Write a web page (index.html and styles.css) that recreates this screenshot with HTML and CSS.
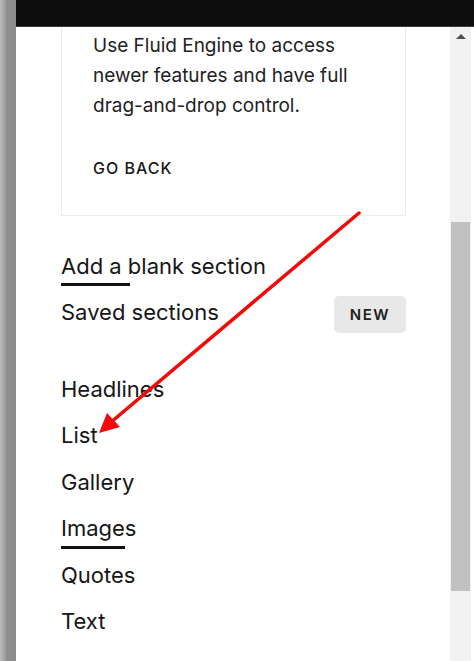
FILE: index.html
```html
<!DOCTYPE html>
<html lang="en">
<head>
<meta charset="utf-8">
<title>Add section</title>
<link rel="stylesheet" href="styles.css">
</head>
<body>
<div class="frame">
  <div class="edge"></div>
  <div class="window">
    <div class="topbar"></div>
    <div class="panel">
      <div class="content">
        <div class="card">
          <p class="card-text">Use Fluid Engine to access newer features and have full drag-and-drop control.</p>
          <div class="card-link">GO BACK</div>
        </div>
        <ul class="group">
          <li class="item active">Add a blank section</li>
          <li class="item with-badge"><span>Saved sections</span><span class="badge">NEW</span></li>
        </ul>
        <ul class="group second">
          <li class="item">Headlines</li>
          <li class="item">List</li>
          <li class="item">Gallery</li>
          <li class="item active short">Images</li>
          <li class="item">Quotes</li>
          <li class="item">Text</li>
        </ul>
      </div>
      <div class="scrollbar">
        <div class="scroll-up"></div>
        <div class="scroll-gap"></div>
        <div class="scroll-thumb"></div>
      </div>
      <div class="rim"></div>
    </div>
  </div>
</div>
<svg class="annotation" width="474" height="661" viewBox="0 0 474 661" xmlns="http://www.w3.org/2000/svg">
  <line x1="359" y1="213" x2="110" y2="423" stroke="#f20a0a" stroke-width="3.5" stroke-linecap="round"/>
  <polygon points="99,433 107,413 120,427" fill="#f20a0a"/>
</svg>
</body>
</html>
```

FILE: styles.css
```css
* { box-sizing: border-box; }
html, body { margin: 0; padding: 0; }
body {
  width: 474px;
  height: 661px;
  overflow: hidden;
  font-family: Inter, "Noto Sans", "Liberation Sans", sans-serif;
  color: #1b1b1b;
  background: #fff;
  position: relative;
}
.frame {
  display: flex;
  height: 661px;
}
.edge {
  width: 16px;
  flex: none;
  background: linear-gradient(to right, #bcbcbc 0, #a6a6a6 4px, #8f8f8f 7px, #8c8c8c 16px);
}
.window {
  flex: 1;
  display: flex;
  flex-direction: column;
}
.topbar {
  height: 27px;
  flex: none;
  background: #0d0d0d;
  border-bottom: 1px solid #3a3a3a;
}
.panel {
  flex: 1;
  display: flex;
  background: #fff;
}
.content {
  flex: 1;
  padding: 0 44px 0 45px;
}
.card {
  border: 1px solid #ececec;
  border-top: none;
  padding: 4px 31px 37px 31px;
}
.card-text {
  margin: 0;
  font-size: 19px;
  line-height: 30px;
  color: #222;
  max-width: 270px;
}
.card-link {
  margin-top: 37px;
  font-size: 16px;
  line-height: 20px;
  font-weight: 500;
  letter-spacing: 1px;
  color: #1b1b1b;
}
.group {
  list-style: none;
  margin: 26.5px 0 0 0;
  padding: 0;
}
.group.second {
  margin-top: 30px;
}
.item {
  position: relative;
  font-size: 22px;
  line-height: 24px;
  padding: 11.25px 0;
  color: #161616;
}
.item.active::after {
  content: "";
  position: absolute;
  left: 0;
  top: 40px;
  width: 69px;
  height: 3px;
  background: #111;
}
.item.short::after {
  top: 41px;
  width: 64px;
}
.with-badge {
  display: flex;
  align-items: center;
  justify-content: space-between;
}
.badge {
  display: inline-flex;
  align-items: center;
  justify-content: center;
  width: 72px;
  height: 37px;
  margin: -4px 0 -9px 0;
  background: #e8e8e8;
  border-radius: 5px;
  font-size: 15px;
  line-height: 20px;
  font-weight: 600;
  letter-spacing: 1.5px;
  color: #222;
}
.scrollbar {
  width: 21px;
  flex: none;
  background: #f1f1f1;
  display: flex;
  flex-direction: column;
  align-items: center;
}
.scroll-up {
  margin-top: 7px;
  width: 0;
  height: 0;
  border-left: 5px solid transparent;
  border-right: 5px solid transparent;
  border-bottom: 5px solid #505050;
}
.scroll-gap {
  height: 183px;
}
.scroll-thumb {
  width: 19px;
  height: 369px;
  background: #c1c1c1;
}
.rim {
  width: 3px;
  flex: none;
  background: #fff;
}
.annotation {
  position: absolute;
  left: 0;
  top: 0;
  pointer-events: none;
}
```
